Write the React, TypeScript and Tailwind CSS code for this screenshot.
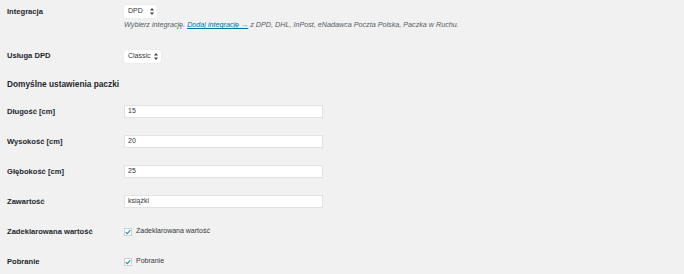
import React from 'react'

function UpDown() {
  return (
    <svg width="4" height="7" viewBox="0 0 4 7" className="ml-auto shrink-0">
      <path d="M2 0 L4 2.6 L0 2.6 Z" fill="#444" />
      <path d="M2 7 L4 4.4 L0 4.4 Z" fill="#444" />
    </svg>
  )
}

function Select({ value, width }: { value: string; width: string }) {
  return (
    <div className={`flex items-center h-[13px] ${width} bg-white rounded-[2px] shadow-[0_0_1px_rgba(0,0,0,0.18)] pl-[4px] pr-[3px] text-[7px] text-[#32373c]`}>
      <span>{value}</span>
      <UpDown />
    </div>
  )
}

function TextInput({ value }: { value: string }) {
  return (
    <div className="flex items-center h-[13px] w-[199px] bg-white border border-[#e2e2e2] pl-[3px] text-[7px] text-[#32373c]">
      {value}
    </div>
  )
}

function Check({ label }: { label: string }) {
  return (
    <div className="flex items-center gap-[4px] text-[7px] text-[#32373c]">
      <div className="w-[8px] h-[8px] bg-white border border-[#cfcfcf] flex items-center justify-center">
        <svg width="7" height="6" viewBox="0 0 7 6">
          <path d="M0.8 3.1 L2.7 4.9 L6.2 0.8" fill="none" stroke="#1e8cbe" strokeWidth="1.3" />
        </svg>
      </div>
      <span>{label}</span>
    </div>
  )
}

function Label({ children }: { children: React.ReactNode }) {
  return <div className="w-[117px] shrink-0 text-[7.6px] font-semibold text-[#23282d]">{children}</div>
}

export default function App() {
  return (
    <div className="w-[684px] h-[274px] bg-[#f1f1f1] pl-[7px] pt-[5px] overflow-hidden" style={{ fontFamily: '"Liberation Sans", Arial, sans-serif' }}>
      <div className="flex">
        <div className="h-[13px] flex items-center"><Label>Integracja</Label></div>
        <div>
          <Select value="DPD" width="w-[33px]" />
          <div className="mt-[2px] h-[10px] leading-[10px] text-[7.2px] italic text-[#555d66] whitespace-nowrap">
            Wybierz integrację.{' '}
            <span className="text-[#0073aa] underline">Dodaj integrację →</span>
            {' '}z DPD, DHL, InPost, eNadawca Poczta Polska, Paczka w Ruchu.
          </div>
        </div>
      </div>

      <div className="flex items-center h-[14px] mt-[19px]">
        <Label>Usługa DPD</Label>
        <Select value="Classic" width="w-[37px]" />
      </div>

      <div className="h-[13px] mt-[15px] flex items-center text-[8.3px] font-semibold text-[#23282d]">
        Domyślne ustawienia paczki
      </div>

      <div className="flex items-center h-[13px] mt-[14px]">
        <Label>Długość [cm]</Label>
        <TextInput value="15" />
      </div>
      <div className="flex items-center h-[13px] mt-[17px]">
        <Label>Wysokość [cm]</Label>
        <TextInput value="20" />
      </div>
      <div className="flex items-center h-[13px] mt-[17px]">
        <Label>Głębokość [cm]</Label>
        <TextInput value="25" />
      </div>
      <div className="flex items-center h-[13px] mt-[17px]">
        <Label>Zawartość</Label>
        <TextInput value="książki" />
      </div>

      <div className="flex items-center h-[13px] mt-[17px]">
        <Label>Zadeklarowana wartość</Label>
        <Check label="Zadeklarowana wartość" />
      </div>
      <div className="flex items-center h-[13px] mt-[17px]">
        <Label>Pobranie</Label>
        <Check label="Pobranie" />
      </div>
    </div>
  )
}
